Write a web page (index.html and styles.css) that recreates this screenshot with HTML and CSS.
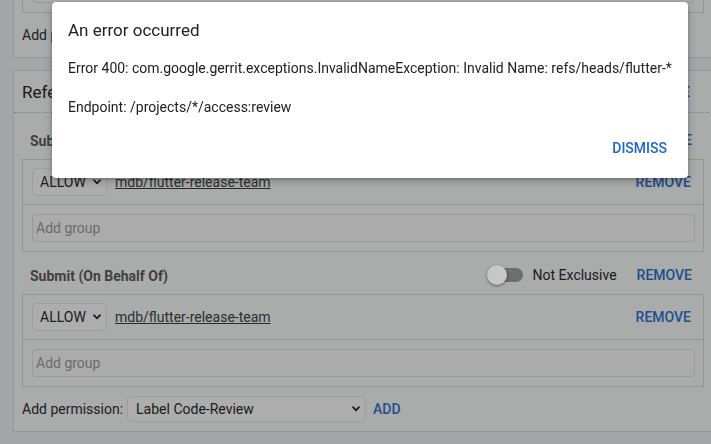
FILE: index.html
```html
<!DOCTYPE html>
<html lang="en">
<head>
<meta charset="utf-8">
<title>Access</title>
<link rel="stylesheet" href="styles.css">
</head>
<body>
<div class="page">
  <section class="section s1">
    <div class="section-body">
      <div class="rules">
        <div class="rule-add"><input class="group-input" type="text" placeholder="Add group"></div>
      </div>
      <div class="add-perm">
        <span>Add permission:</span>
        <span class="select-wrap perm-select">
          <select class="select"><option>Label Code-Review</option></select>
          <svg class="chev" width="8" height="6" viewBox="0 0 8 6"><path d="M1 1.2 L4 4.4 L7 1.2" fill="none" stroke="#222" stroke-width="1.7" stroke-linecap="round" stroke-linejoin="round"/></svg>
        </span>
        <button class="btn">ADD</button>
      </div>
    </div>
  </section>

  <section class="section">
    <div class="section-head">
      <span class="ref-title">Reference: refs/heads/flutter-*</span>
      <button class="btn">REMOVE</button>
    </div>
    <div class="section-body">
      <div class="permission first">
        <div class="perm-head">
          <span class="perm-label">Submit</span>
          <span class="toggle"><span class="track"></span><span class="knob"></span></span>
          <span class="excl">Not Exclusive</span>
          <button class="btn">REMOVE</button>
        </div>
        <div class="rules">
          <div class="rule">
            <span class="select-wrap action-select">
              <select class="select"><option>ALLOW</option></select>
              <svg class="chev" width="8" height="6" viewBox="0 0 8 6"><path d="M1 1.2 L4 4.4 L7 1.2" fill="none" stroke="#222" stroke-width="1.7" stroke-linecap="round" stroke-linejoin="round"/></svg>
            </span>
            <a class="group-link" href="#">mdb/flutter-release-team</a>
            <button class="btn">REMOVE</button>
          </div>
          <div class="rule-add"><input class="group-input" type="text" placeholder="Add group"></div>
        </div>
      </div>

      <div class="permission">
        <div class="perm-head">
          <span class="perm-label">Submit (On Behalf Of)</span>
          <span class="toggle"><span class="track"></span><span class="knob"></span></span>
          <span class="excl">Not Exclusive</span>
          <button class="btn">REMOVE</button>
        </div>
        <div class="rules">
          <div class="rule">
            <span class="select-wrap action-select">
              <select class="select"><option>ALLOW</option></select>
              <svg class="chev" width="8" height="6" viewBox="0 0 8 6"><path d="M1 1.2 L4 4.4 L7 1.2" fill="none" stroke="#222" stroke-width="1.7" stroke-linecap="round" stroke-linejoin="round"/></svg>
            </span>
            <a class="group-link" href="#">mdb/flutter-release-team</a>
            <button class="btn">REMOVE</button>
          </div>
          <div class="rule-add"><input class="group-input" type="text" placeholder="Add group"></div>
        </div>
      </div>

      <div class="add-perm">
        <span>Add permission:</span>
        <span class="select-wrap perm-select">
          <select class="select"><option>Label Code-Review</option></select>
          <svg class="chev" width="8" height="6" viewBox="0 0 8 6"><path d="M1 1.2 L4 4.4 L7 1.2" fill="none" stroke="#222" stroke-width="1.7" stroke-linecap="round" stroke-linejoin="round"/></svg>
        </span>
        <button class="btn">ADD</button>
      </div>
    </div>
  </section>
</div>

<div class="backdrop"></div>

<div class="dialog" role="dialog">
  <div class="dialog-title">An error occurred</div>
  <div class="dialog-body">
    <div>Error 400: com.google.gerrit.exceptions.InvalidNameException: Invalid Name: refs/heads/flutter-*</div>
    <div class="endpoint">Endpoint: /projects/*/access:review</div>
  </div>
  <div class="dialog-foot"><button class="dialog-btn">DISMISS</button></div>
</div>
</body>
</html>
```

FILE: styles.css
```css
html, body {
  margin: 0;
  padding: 0;
}
body {
  width: 711px;
  height: 444px;
  overflow: hidden;
  background: #d3d4d6;
  font-family: Roboto, "Liberation Sans", sans-serif;
  font-size: 14px;
  color: #292929;
}
.page {
  padding-left: 13px;
  margin-top: -36px;
}
.section {
  width: 700px;
  box-sizing: border-box;
  border: 1px solid #bfbfbf;
  background: #dadbdc;
}
.section + .section {
  margin-top: 12px;
}
.section-body {
  padding: 0 8px;
}
.section-head {
  display: flex;
  align-items: center;
  justify-content: space-between;
  height: 41px;
  padding: 0 18px 0 8px;
  border-bottom: 1px dotted #a8a8a8;
}
.ref-title {
  font-size: 17px;
  color: #222;
}
.permission.first {
  padding-top: 4px;
}
.perm-head {
  display: flex;
  align-items: center;
  box-sizing: border-box;
  height: 42px;
  padding: 3px 8px 0;
}
.perm-label {
  flex: 1;
  font-size: 14px;
  font-weight: 700;
  color: #525252;
  padding-top: 3px;
}
.toggle {
  position: relative;
  width: 36px;
  height: 14px;
}
.track {
  position: absolute;
  left: 2px;
  right: 0;
  top: 0;
  bottom: 0;
  border-radius: 7px;
  background: #8d8d8d;
}
.knob {
  position: absolute;
  left: 0;
  top: -3px;
  width: 20px;
  height: 20px;
  border-radius: 50%;
  background: #fff;
  box-shadow: 0 1px 3px rgba(0, 0, 0, 0.45);
}
.excl {
  margin-left: 10px;
  font-size: 14px;
  color: #262626;
}
.perm-head .btn {
  margin-left: 16px;
}
.rules {
  border: 1px solid #bfbfbf;
}
.rule {
  display: flex;
  align-items: center;
  padding: 8px 8px 8px 9px;
  border-bottom: 1px solid #bfbfbf;
}
.rule .btn {
  margin-left: auto;
}
.rule-add {
  padding: 9px 8px 9px 9px;
}
.group-input {
  display: block;
  width: 100%;
  height: 28px;
  box-sizing: border-box;
  border: 1px solid #c4c4c4;
  border-radius: 4px;
  background: #dbdbdb;
  padding: 0 3px;
  font-family: Roboto, "Liberation Sans", sans-serif;
  font-size: 14px;
  color: #292929;
  outline: none;
}
.group-input::placeholder {
  color: #8a8a8a;
}
.select-wrap {
  position: relative;
  display: inline-flex;
}
.select {
  -webkit-appearance: none;
  appearance: none;
  box-sizing: border-box;
  border: 1px solid #c9c9c9;
  border-radius: 5px;
  background: #dedede;
  font-family: Roboto, "Liberation Sans", sans-serif;
  font-size: 14px;
  color: #262626;
  padding: 0 14px 0 7px;
  margin: 0;
  outline: none;
}
.action-select .select {
  width: 75px;
  height: 28px;
}
.perm-select {
  margin-left: 4px;
}
.perm-select .select {
  width: 239px;
  height: 26px;
  padding-left: 8px;
}
.chev {
  position: absolute;
  right: 6px;
  top: 50%;
  margin-top: -3px;
  pointer-events: none;
}
.group-link {
  margin-left: 8px;
  font-size: 14px;
  color: #3a3a3a;
  text-decoration: underline;
}
.add-perm {
  display: flex;
  align-items: center;
  height: 44px;
  font-size: 14px;
}
.add-perm .btn {
  margin-left: 3px;
}
.btn {
  background: none;
  border: 0;
  padding: 0 4px;
  font-family: Roboto, "Liberation Sans", sans-serif;
  font-size: 14px;
  font-weight: 500;
  color: #2866b8;
  cursor: pointer;
}
.backdrop {
  position: fixed;
  inset: 0;
  background: rgba(0, 0, 0, 0.22);
}
.dialog {
  position: fixed;
  left: 52px;
  top: 2px;
  width: 636px;
  box-sizing: border-box;
  background: #fff;
  border-radius: 4px;
  box-shadow: 0 3px 10px rgba(0, 0, 0, 0.25), 0 1px 3px rgba(0, 0, 0, 0.2);
  color: #212121;
}
.dialog-title {
  font-size: 17px;
  line-height: 24px;
  padding: 16px 16px 0;
}
.dialog-body {
  padding: 17px 16px 0;
  font-size: 14px;
  line-height: 19.5px;
}
.endpoint {
  margin-top: 19.5px;
}
.dialog-foot {
  display: flex;
  justify-content: flex-end;
  padding: 12px 13px;
}
.dialog-btn {
  height: 36px;
  background: none;
  border: 0;
  padding: 0 8px;
  font-family: Roboto, "Liberation Sans", sans-serif;
  font-size: 14px;
  font-weight: 500;
  color: #1a67c9;
  cursor: pointer;
}
```
